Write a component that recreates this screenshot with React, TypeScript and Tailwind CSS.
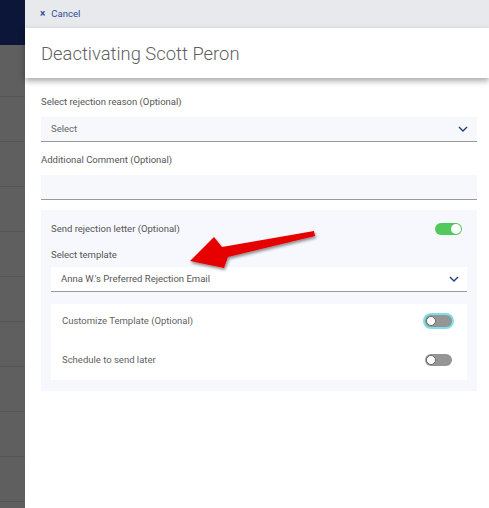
import React from "react";

function Chevron() {
  return (
    <svg width="10" height="6" viewBox="0 0 10 6" className="shrink-0">
      <polyline points="1,1 5,5 9,1" fill="none" stroke="#1f3f7a" strokeWidth="1.4" />
    </svg>
  );
}

function Toggle({ on, focused }: { on?: boolean; focused?: boolean }) {
  return (
    <div
      className={`rounded-full p-[2px] ${focused ? "bg-[#7ddfe8]" : "bg-transparent"}`}
    >
      <div
        className={`w-[27px] h-[12px] rounded-full flex items-center px-[1px] ${
          on ? "bg-[#52c95a] justify-end" : "bg-[#959595] justify-start"
        }`}
      >
        <div
          className={`w-[10px] h-[10px] rounded-full bg-white ${on ? "" : "border border-[#6b6b6b]"}`}
        />
      </div>
    </div>
  );
}

const rows = [52, 45, 45, 45, 45, 45, 45, 45, 45, 45, 45];

export default function App() {
  return (
    <div
      className="w-[489px] h-[508px] flex overflow-hidden bg-white"
      style={{ fontFamily: "Roboto, 'Liberation Sans', sans-serif" }}
    >
      <div className="w-[25px] shrink-0 flex flex-col bg-[#5f5f5f]">
        <div className="h-[45px] bg-[#0c1638] shrink-0" />
        {rows.map((h, i) => (
          <div
            key={i}
            className="border-b border-[#555] shrink-0"
            style={{ height: h }}
          />
        ))}
      </div>

      <div className="flex-1 relative flex flex-col">
        <div className="h-[28px] bg-[#e8e9ed] flex items-center pl-[15px] gap-[6px] text-[9.5px] text-[#2b4f93]">
          <span className="text-[10px] font-bold leading-none">×</span>
          <span>Cancel</span>
        </div>
        <div className="h-[50px] bg-white flex items-center pl-[16px] pt-[2px] shadow-[0_3px_6px_rgba(0,0,0,0.35)] relative z-10">
          <h1 className="text-[18.4px] font-light text-[#5f5f5f]">
            Deactivating Scott Peron
          </h1>
        </div>

        <div className="pl-[16px] pr-[12px] pt-[17px] flex flex-col">
          <div className="h-[14px] flex items-center text-[9.5px] text-[#555]">
            Select rejection reason (Optional)
          </div>
          <div className="mt-[8px] h-[25px] bg-[#f7f8fc] border-b border-[#9a9a9a] flex items-center justify-between pl-[10px] pr-[9px] text-[9.5px] text-[#666]">
            <span>Select</span>
            <Chevron />
          </div>

          <div className="mt-[11px] h-[14px] flex items-center text-[9.5px] text-[#555]">
            Additional Comment (Optional)
          </div>
          <div className="mt-[8px] h-[25px] bg-[#f7f8fc] border-b border-[#9a9a9a]" />

          <div className="mt-[10px] bg-[#f7f8fd] pl-[10px] pr-[10px] pt-[11px] pb-[11px] flex flex-col">
            <div className="h-[16px] flex items-center justify-between pr-[3px] text-[9.5px] text-[#555]">
              <span>Send rejection letter (Optional)</span>
              <Toggle on />
            </div>
            <div className="mt-[11px] h-[14px] flex items-center text-[9.5px] text-[#555]">
              Select template
            </div>
            <div className="mt-[5px] h-[25px] bg-white border-b border-[#9a9a9a] flex items-center justify-between pl-[10px] pr-[8px] text-[9.5px] text-[#555]">
              <span>Anna W.'s Preferred Rejection Email</span>
              <Chevron />
            </div>

            <div className="mt-[12px] h-[76px] bg-white pl-[11px] pr-[13px] pt-[8px] flex flex-col gap-[21px] text-[9.5px] text-[#5f5f5f]">
              <div className="h-[18px] flex items-center justify-between">
                <span>Customize Template (Optional)</span>
                <Toggle focused />
              </div>
              <div className="h-[18px] flex items-center justify-between">
                <span>Schedule to send later</span>
                <Toggle />
              </div>
            </div>
          </div>
        </div>

        <svg
          className="absolute left-0 top-0 pointer-events-none"
          width="464"
          height="508"
          viewBox="25 0 464 508"
        >
          <defs>
            <filter id="sh" x="-20%" y="-50%" width="140%" height="200%">
              <feDropShadow dx="1" dy="2" stdDeviation="1.5" floodColor="#000" floodOpacity="0.45" />
            </filter>
          </defs>
          <polygon
            points="190,261 214,237 222,247 314,231 315,236 228,257 224,268"
            fill="#e60000"
            filter="url(#sh)"
          />
        </svg>
      </div>
    </div>
  );
}
